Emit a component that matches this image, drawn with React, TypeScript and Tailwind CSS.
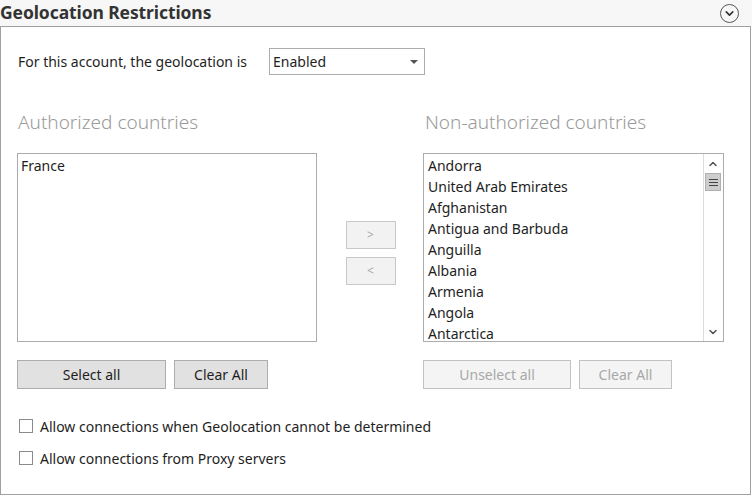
import { ChevronDown, ChevronUp } from "lucide-react"

const countries = [
  "Andorra",
  "United Arab Emirates",
  "Afghanistan",
  "Antigua and Barbuda",
  "Anguilla",
  "Albania",
  "Armenia",
  "Angola",
  "Antarctica",
]

export default function App() {
  return (
    <div
      className="w-[752px] h-[496px] bg-white text-[#1e1e1e] overflow-hidden"
      style={{ fontFamily: '"Noto Sans", "Open Sans", sans-serif' }}
    >
      {/* header */}
      <div className="h-[26px] bg-[#f7f7f7] flex items-center justify-between pr-[13px]">
        <span className="text-[17.5px] font-bold text-[#333] tracking-[-0.1px] leading-none">
          Geolocation Restrictions
        </span>
        <div className="w-[19px] h-[19px] rounded-full border border-[#555] flex items-center justify-center">
          <ChevronDown size={13} strokeWidth={3} className="text-[#333] mt-[1px]" />
        </div>
      </div>

      {/* panel */}
      <div className="h-[469px] w-[751px] border border-[#a0a0a0] pt-[21px] pl-[16px] text-[14px]">
        <div className="flex items-center h-[27px]">
          <span className="w-[252px] pl-[1px]">For this account, the geolocation is</span>
          <div className="w-[156px] h-[27px] border border-[#acacac] flex items-center justify-between pl-[3px] pr-[6px]">
            <span>Enabled</span>
            <span className="w-0 h-0 border-l-[4px] border-r-[4px] border-t-[4px] border-l-transparent border-r-transparent border-t-[#555]" />
          </div>
        </div>

        <div className="flex mt-[34px]">
          {/* left column */}
          <div className="w-[300px]">
            <div className="text-[19px] text-[#9a9a9a] font-light h-[26px] leading-[26px] pl-[1px]">
              Authorized countries
            </div>
            <div className="mt-[18px] h-[189px] border border-[#acacac] px-[3px] pt-[1px] leading-[21px]">
              France
            </div>
            <div className="flex gap-[8px] mt-[18px]">
              <button className="w-[149px] h-[29px] bg-[#e1e1e1] border border-[#adadad] text-[14px]">
                Select all
              </button>
              <button className="w-[94px] h-[29px] bg-[#e1e1e1] border border-[#adadad] text-[14px]">
                Clear All
              </button>
            </div>
          </div>

          {/* move buttons */}
          <div className="w-[106px] flex flex-col items-center pt-[112px] gap-[8px] pl-[1px]">
            <button className="w-[50px] h-[28px] bg-[#f2f2f2] border border-[#c8c8c8] text-[#a8a8a8] text-[12px]">
              &gt;
            </button>
            <button className="w-[50px] h-[28px] bg-[#f2f2f2] border border-[#c8c8c8] text-[#a8a8a8] text-[12px]">
              &lt;
            </button>
          </div>

          {/* right column */}
          <div className="w-[301px]">
            <div className="text-[19px] text-[#9a9a9a] font-light h-[26px] leading-[26px] pl-[2px]">
              Non-authorized countries
            </div>
            <div className="mt-[18px] h-[189px] border border-[#acacac] flex overflow-hidden">
              <div className="flex-1 px-[4px] pt-[1px] leading-[21px] overflow-hidden">
                {countries.map((c) => (
                  <div key={c} className="whitespace-nowrap">
                    {c}
                  </div>
                ))}
              </div>
              <div className="w-[19px] mr-[1px] border-l border-[#dcdcdc] flex flex-col">
                <div className="h-[19px] flex items-center justify-center">
                  <ChevronUp size={12} strokeWidth={3} className="text-[#505050]" />
                </div>
                <div className="h-[18px] mx-[1px] bg-[#cdcdcd] border border-[#b0b0b0] flex flex-col items-center justify-center gap-[2px]">
                  <span className="w-[9px] h-[1px] bg-[#444]" />
                  <span className="w-[9px] h-[1px] bg-[#444]" />
                  <span className="w-[9px] h-[1px] bg-[#444]" />
                </div>
                <div className="flex-1" />
                <div className="h-[19px] flex items-center justify-center">
                  <ChevronDown size={12} strokeWidth={3} className="text-[#505050]" />
                </div>
              </div>
            </div>
            <div className="flex gap-[8px] mt-[18px]">
              <button className="w-[148px] h-[29px] bg-[#f4f4f4] border border-[#c2c2c2] text-[#a8a8a8] text-[14px]">
                Unselect all
              </button>
              <button className="w-[93px] h-[29px] bg-[#f4f4f4] border border-[#c2c2c2] text-[#a8a8a8] text-[14px]">
                Clear All
              </button>
            </div>
          </div>
        </div>

        {/* checkboxes */}
        <div className="mt-[30px] flex flex-col gap-[18px] pl-[2px]">
          <label className="flex items-center gap-[7px] h-[14px]">
            <span className="w-[14px] h-[14px] border border-[#8a8a8a] bg-white" />
            <span>Allow connections when Geolocation cannot be determined</span>
          </label>
          <label className="flex items-center gap-[7px] h-[14px]">
            <span className="w-[14px] h-[14px] border border-[#8a8a8a] bg-white" />
            <span>Allow connections from Proxy servers</span>
          </label>
        </div>
      </div>
    </div>
  )
}
